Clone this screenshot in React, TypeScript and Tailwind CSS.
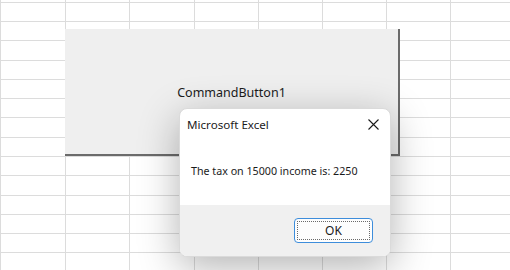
import React from "react";

const COL_WIDTHS = ["w-[65px]", "w-[64px]", "w-[65px]", "w-[64px]", "w-[64px]", "w-[64px]", "w-[64px]", "w-[64px]"];
const ROW_HEIGHTS = [
  "h-[3px]",
  "h-[19px]", "h-[19px]", "h-[20px]", "h-[19px]", "h-[19px]", "h-[19px]", "h-[20px]",
  "h-[19px]", "h-[19px]", "h-[20px]", "h-[19px]", "h-[19px]", "h-[19px]", "h-[19px]",
];

function Sheet() {
  return (
    <div className="flex flex-col border-l border-[#dcdcdc]">
      {ROW_HEIGHTS.map((h, r) => (
        <div key={r} className={`flex shrink-0 ${h}`}>
          {COL_WIDTHS.map((w, c) => (
            <div key={c} className={`shrink-0 border-b border-r border-[#dcdcdc] ${w}`} />
          ))}
        </div>
      ))}
    </div>
  );
}

export default function App() {
  return (
    <div
      className="relative w-[510px] h-[270px] overflow-hidden bg-white text-[#1b1b1b]"
      style={{ fontFamily: '"Noto Sans", "Open Sans", sans-serif' }}
    >
      <Sheet />

      {/* ActiveX command button on the sheet */}
      <div className="absolute left-[65px] top-[29px] w-[335px] h-[127px] bg-[#efefef] border-r-2 border-b-2 border-[#6b6b6b] flex items-center justify-center pt-[3px]">
        <span className="text-[12.5px] leading-none">CommandButton1</span>
      </div>

      {/* MsgBox */}
      <div className="absolute left-[179px] top-[108px] w-[212px] h-[149px] rounded-[8px] bg-white border border-[#dadada] shadow-[0_10px_40px_rgba(0,0,0,0.3)] overflow-hidden flex flex-col">
        <div className="flex items-center justify-between h-[31px] pl-[7px] pr-[11px] pt-[1px]">
          <span className="text-[11.6px] leading-none">Microsoft Excel</span>
          <svg width="11" height="11" viewBox="0 0 11 11" className="mt-[-1px]">
            <path d="M0.5 0.5 L10.5 10.5 M10.5 0.5 L0.5 10.5" stroke="#1b1b1b" strokeWidth="1.1" fill="none" />
          </svg>
        </div>
        <div className="flex-1 flex items-center pl-[11px] pb-[3px]">
          <span className="text-[10.7px] leading-none">The tax on 15000 income is: 2250</span>
        </div>
        <div className="h-[51px] bg-[#f0f0f0] flex items-center justify-end pr-[17px]">
          <button className="relative w-[79px] h-[25px] rounded-[4px] bg-[#fdfdfd] border border-[#3d8ddb] flex items-center justify-center">
            <span className="absolute inset-[2px] border border-dotted border-[#6a6a6a]" />
            <span className="text-[12px] leading-none">OK</span>
          </button>
        </div>
      </div>
    </div>
  );
}
